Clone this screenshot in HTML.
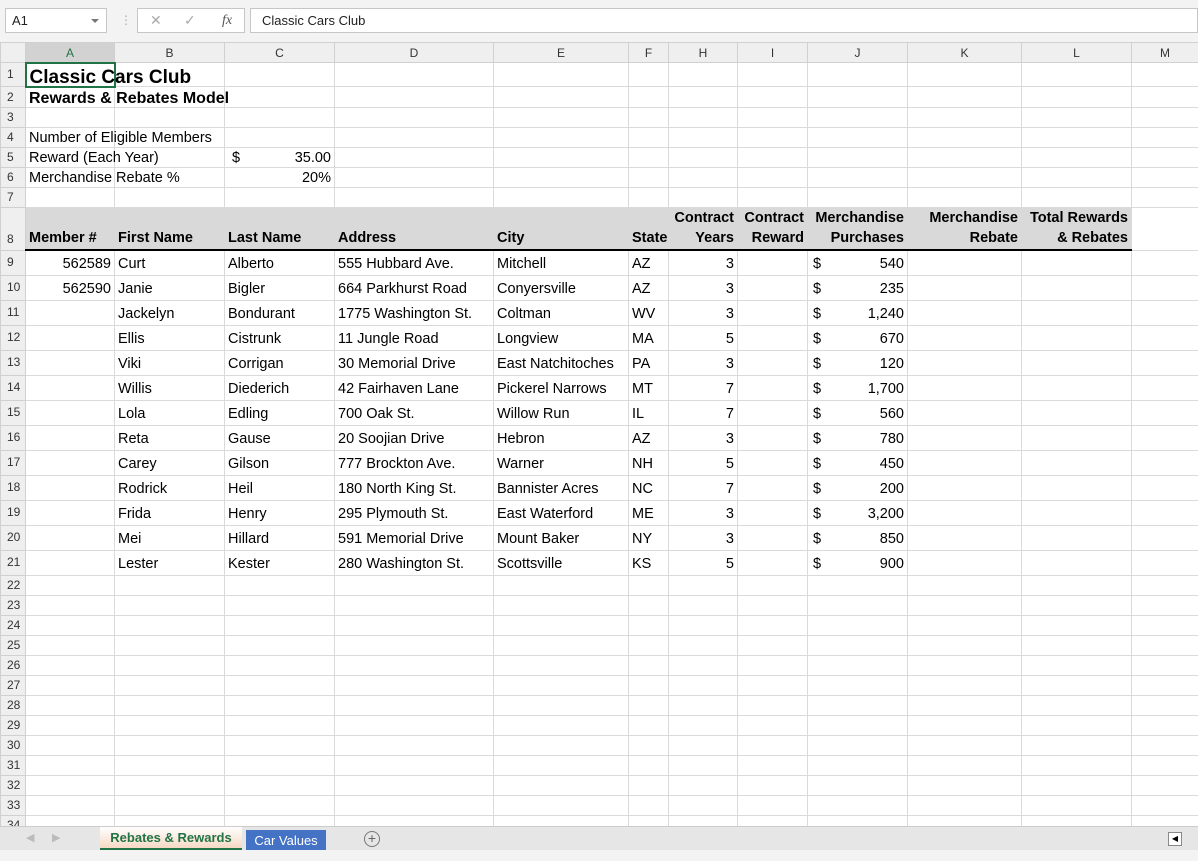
<!DOCTYPE html>
<html><head><meta charset="utf-8"><style>
*{box-sizing:border-box;margin:0;padding:0}
body{width:1198px;height:861px;overflow:hidden;background:#fff;font-family:"Liberation Sans",Arial,sans-serif;position:relative}
.top{position:absolute;left:0;top:0;width:1198px;height:42px;background:#f3f3f3}
.nb{position:absolute;left:5px;top:8px;width:102px;height:25px;background:#fff;border:1px solid #c6c6c6;font-size:13px;line-height:23px;padding-left:6px;color:#222}
.nb:after{content:"";position:absolute;right:7px;top:10px;border:4px solid transparent;border-top:4px solid #777}
.fx{position:absolute;left:137px;top:8px;width:108px;height:25px;background:#fff;border:1px solid #c6c6c6;color:#aaa;font-size:14px;line-height:23px}
.fb{position:absolute;left:250px;top:8px;width:948px;height:25px;background:#fff;border:1px solid #c6c6c6;font-size:13px;line-height:23px;padding-left:11px;color:#222}
table{position:absolute;left:0;top:42px;border-collapse:collapse;table-layout:fixed;width:1198px;font-size:14.5px;color:#000}
td{border:1px solid #dadada;padding:0 3px;white-space:nowrap;overflow:visible;height:20px;vertical-align:bottom;line-height:17px}
tr.ch td{background:#efefef;text-align:center;font-size:12px;color:#333;border-color:#d0d0d0;line-height:18px;height:20px}
td.rh{background:#efefef;font-size:12px;color:#333;text-align:left;padding-left:6px;border-color:#d0d0d0;vertical-align:middle}
tr.ch td.sel{background:#d2d2d2;color:#217346;border-bottom:2px solid #217346}
.r{text-align:right}
.hd td.g{background:#d9d9d9;font-weight:bold;border-color:#d9d9d9;border-bottom:2px solid #000;line-height:20px;vertical-align:bottom;padding-bottom:1px}
tr.d td{height:25px;vertical-align:bottom;padding-bottom:2px}
tr.d td.rh{vertical-align:middle;padding-bottom:0}
.tabs{position:absolute;left:0;top:826px;width:1198px;height:24px;background:#e6e6e6;border-top:1px solid #ccc}
.stat{position:absolute;left:0;top:850px;width:1198px;height:11px;background:#f3f3f3}
</style></head><body>
<div class="top">
<div class="nb">A1</div>
<div style="position:absolute;left:120px;top:13px;color:#aaa;font-size:12px">⋮</div>
<div class="fx"><span style="position:absolute;left:12px">✕</span><span style="position:absolute;left:46px">✓</span><span style="position:absolute;left:84px;color:#555;font-style:italic;font-family:'Liberation Serif',serif">fx</span></div>
<div class="fb">Classic Cars Club</div>
</div>
<table>
<colgroup><col style="width:25px"><col style="width:89px"><col style="width:110px"><col style="width:110px"><col style="width:159px"><col style="width:135px"><col style="width:40px"><col style="width:69px"><col style="width:70px"><col style="width:100px"><col style="width:114px"><col style="width:110px"><col style="width:67px"></colgroup>
<tr class="ch"><td style="background:#efefef"></td><td class="sel">A</td><td>B</td><td>C</td><td>D</td><td>E</td><td>F</td><td>H</td><td>I</td><td>J</td><td>K</td><td>L</td><td>M</td></tr>
<tr style="height:24px"><td class="rh">1</td><td style="font-weight:bold;font-size:19px;border:2px solid #217346">Classic Cars Club</td><td></td><td></td><td></td><td></td><td></td><td></td><td></td><td></td><td></td><td></td><td></td></tr>
<tr style="height:21px"><td class="rh">2</td><td style="font-weight:bold;font-size:16px">Rewards &amp; Rebates Model</td><td></td><td></td><td></td><td></td><td></td><td></td><td></td><td></td><td></td><td></td><td></td></tr>
<tr><td class="rh">3</td><td></td><td></td><td></td><td></td><td></td><td></td><td></td><td></td><td></td><td></td><td></td><td></td></tr>
<tr><td class="rh">4</td><td>Number of Eligible Members</td><td></td><td></td><td></td><td></td><td></td><td></td><td></td><td></td><td></td><td></td><td></td></tr>
<tr><td class="rh">5</td><td>Reward (Each Year)</td><td></td><td><span style="float:left;padding-left:4px">$</span><span style="float:right">35.00</span></td><td></td><td></td><td></td><td></td><td></td><td></td><td></td><td></td><td></td></tr>
<tr><td class="rh">6</td><td>Merchandise Rebate %</td><td></td><td class="r">20%</td><td></td><td></td><td></td><td></td><td></td><td></td><td></td><td></td><td></td></tr>
<tr><td class="rh">7</td><td></td><td></td><td></td><td></td><td></td><td></td><td></td><td></td><td></td><td></td><td></td><td></td></tr>
<tr class="hd" style="height:42px"><td class="rh" style="vertical-align:bottom;padding-bottom:2px">8</td><td class="g">Member #</td><td class="g">First Name</td><td class="g">Last Name</td><td class="g">Address</td><td class="g">City</td><td class="g">State</td><td class="g r">Contract<br>Years</td><td class="g r">Contract<br>Reward</td><td class="g r">Merchandise<br>Purchases</td><td class="g r">Merchandise<br>Rebate</td><td class="g r">Total Rewards<br>&amp; Rebates</td><td></td></tr>
<tr class="d"><td class="rh">9</td><td class="r">562589</td><td>Curt</td><td>Alberto</td><td>555 Hubbard Ave.</td><td>Mitchell</td><td>AZ</td><td class="r">3</td><td></td><td><span style="float:left;padding-left:2px">$</span><span style="float:right">540</span></td><td></td><td></td><td></td></tr>
<tr class="d"><td class="rh">10</td><td class="r">562590</td><td>Janie</td><td>Bigler</td><td>664 Parkhurst Road</td><td>Conyersville</td><td>AZ</td><td class="r">3</td><td></td><td><span style="float:left;padding-left:2px">$</span><span style="float:right">235</span></td><td></td><td></td><td></td></tr>
<tr class="d"><td class="rh">11</td><td></td><td>Jackelyn</td><td>Bondurant</td><td>1775 Washington St.</td><td>Coltman</td><td>WV</td><td class="r">3</td><td></td><td><span style="float:left;padding-left:2px">$</span><span style="float:right">1,240</span></td><td></td><td></td><td></td></tr>
<tr class="d"><td class="rh">12</td><td></td><td>Ellis</td><td>Cistrunk</td><td>11 Jungle Road</td><td>Longview</td><td>MA</td><td class="r">5</td><td></td><td><span style="float:left;padding-left:2px">$</span><span style="float:right">670</span></td><td></td><td></td><td></td></tr>
<tr class="d"><td class="rh">13</td><td></td><td>Viki</td><td>Corrigan</td><td>30 Memorial Drive</td><td>East Natchitoches</td><td>PA</td><td class="r">3</td><td></td><td><span style="float:left;padding-left:2px">$</span><span style="float:right">120</span></td><td></td><td></td><td></td></tr>
<tr class="d"><td class="rh">14</td><td></td><td>Willis</td><td>Diederich</td><td>42 Fairhaven Lane</td><td>Pickerel Narrows</td><td>MT</td><td class="r">7</td><td></td><td><span style="float:left;padding-left:2px">$</span><span style="float:right">1,700</span></td><td></td><td></td><td></td></tr>
<tr class="d"><td class="rh">15</td><td></td><td>Lola</td><td>Edling</td><td>700 Oak St.</td><td>Willow Run</td><td>IL</td><td class="r">7</td><td></td><td><span style="float:left;padding-left:2px">$</span><span style="float:right">560</span></td><td></td><td></td><td></td></tr>
<tr class="d"><td class="rh">16</td><td></td><td>Reta</td><td>Gause</td><td>20 Soojian Drive</td><td>Hebron</td><td>AZ</td><td class="r">3</td><td></td><td><span style="float:left;padding-left:2px">$</span><span style="float:right">780</span></td><td></td><td></td><td></td></tr>
<tr class="d"><td class="rh">17</td><td></td><td>Carey</td><td>Gilson</td><td>777 Brockton Ave.</td><td>Warner</td><td>NH</td><td class="r">5</td><td></td><td><span style="float:left;padding-left:2px">$</span><span style="float:right">450</span></td><td></td><td></td><td></td></tr>
<tr class="d"><td class="rh">18</td><td></td><td>Rodrick</td><td>Heil</td><td>180 North King St.</td><td>Bannister Acres</td><td>NC</td><td class="r">7</td><td></td><td><span style="float:left;padding-left:2px">$</span><span style="float:right">200</span></td><td></td><td></td><td></td></tr>
<tr class="d"><td class="rh">19</td><td></td><td>Frida</td><td>Henry</td><td>295 Plymouth St.</td><td>East Waterford</td><td>ME</td><td class="r">3</td><td></td><td><span style="float:left;padding-left:2px">$</span><span style="float:right">3,200</span></td><td></td><td></td><td></td></tr>
<tr class="d"><td class="rh">20</td><td></td><td>Mei</td><td>Hillard</td><td>591 Memorial Drive</td><td>Mount Baker</td><td>NY</td><td class="r">3</td><td></td><td><span style="float:left;padding-left:2px">$</span><span style="float:right">850</span></td><td></td><td></td><td></td></tr>
<tr class="d"><td class="rh">21</td><td></td><td>Lester</td><td>Kester</td><td>280 Washington St.</td><td>Scottsville</td><td>KS</td><td class="r">5</td><td></td><td><span style="float:left;padding-left:2px">$</span><span style="float:right">900</span></td><td></td><td></td><td></td></tr>
<tr><td class="rh">22</td><td></td><td></td><td></td><td></td><td></td><td></td><td></td><td></td><td></td><td></td><td></td><td></td></tr>
<tr><td class="rh">23</td><td></td><td></td><td></td><td></td><td></td><td></td><td></td><td></td><td></td><td></td><td></td><td></td></tr>
<tr><td class="rh">24</td><td></td><td></td><td></td><td></td><td></td><td></td><td></td><td></td><td></td><td></td><td></td><td></td></tr>
<tr><td class="rh">25</td><td></td><td></td><td></td><td></td><td></td><td></td><td></td><td></td><td></td><td></td><td></td><td></td></tr>
<tr><td class="rh">26</td><td></td><td></td><td></td><td></td><td></td><td></td><td></td><td></td><td></td><td></td><td></td><td></td></tr>
<tr><td class="rh">27</td><td></td><td></td><td></td><td></td><td></td><td></td><td></td><td></td><td></td><td></td><td></td><td></td></tr>
<tr><td class="rh">28</td><td></td><td></td><td></td><td></td><td></td><td></td><td></td><td></td><td></td><td></td><td></td><td></td></tr>
<tr><td class="rh">29</td><td></td><td></td><td></td><td></td><td></td><td></td><td></td><td></td><td></td><td></td><td></td><td></td></tr>
<tr><td class="rh">30</td><td></td><td></td><td></td><td></td><td></td><td></td><td></td><td></td><td></td><td></td><td></td><td></td></tr>
<tr><td class="rh">31</td><td></td><td></td><td></td><td></td><td></td><td></td><td></td><td></td><td></td><td></td><td></td><td></td></tr>
<tr><td class="rh">32</td><td></td><td></td><td></td><td></td><td></td><td></td><td></td><td></td><td></td><td></td><td></td><td></td></tr>
<tr><td class="rh">33</td><td></td><td></td><td></td><td></td><td></td><td></td><td></td><td></td><td></td><td></td><td></td><td></td></tr>
<tr><td class="rh">34</td><td></td><td></td><td></td><td></td><td></td><td></td><td></td><td></td><td></td><td></td><td></td><td></td></tr>
</table>
<div class="tabs">
<span style="position:absolute;left:26px;top:4px;color:#bbb;font-size:11px">◀</span>
<span style="position:absolute;left:52px;top:4px;color:#bbb;font-size:11px">▶</span>
<div style="position:absolute;left:100px;top:0;width:142px;height:23px;background:linear-gradient(#fff,#f6d9c4);border-bottom:2px solid #217346;color:#217346;font-weight:bold;font-size:13px;text-align:center;line-height:22px">Rebates &amp; Rewards</div>
<div style="position:absolute;left:246px;top:3px;width:80px;height:22px;background:#4472c4;color:#fff;font-size:13px;text-align:center;line-height:21px">Car Values</div>
<div style="position:absolute;left:364px;top:4px;width:16px;height:16px;border:1px solid #777;border-radius:50%;color:#666;font-size:14px;line-height:13px;text-align:center">+</div>
<div style="position:absolute;left:1168px;top:5px;width:14px;height:14px;border:1px solid #888;background:#fff;font-size:8px;text-align:center;line-height:12px">◀</div>
</div>
<div class="stat"></div>
</body></html>
